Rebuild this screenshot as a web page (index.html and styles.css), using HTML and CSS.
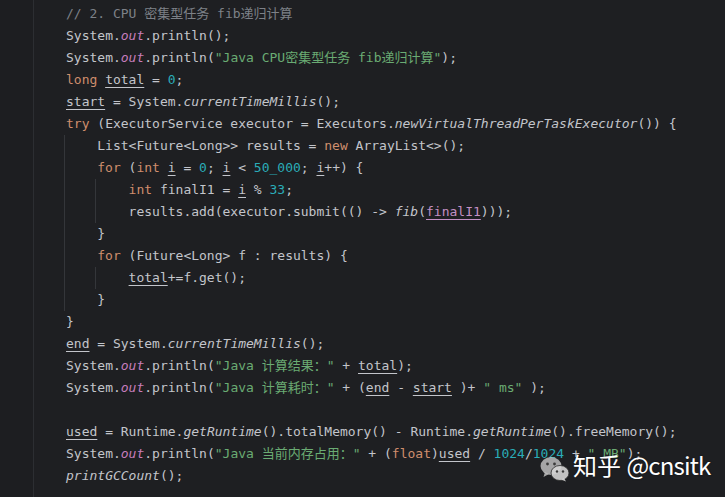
FILE: index.html
```html
<!DOCTYPE html>
<html>
<head>
<meta charset="utf-8">
<link rel="stylesheet" href="styles.css">
</head>
<body>
<div class="editor">
  <div class="gutter"></div>
  <div class="code">
    <div class="ln"><span class="c">// 2. CPU 密集型任务 fib递归计算</span></div>
    <div class="ln">System.<span class="f">out</span>.println();</div>
    <div class="ln">System.<span class="f">out</span>.println(<span class="s">"Java CPU密集型任务 fib递归计算"</span>);</div>
    <div class="ln"><span class="k">long</span> <span class="u">total</span> = <span class="n">0</span>;</div>
    <div class="ln"><span class="u">start</span> = System.<span class="i">currentTimeMillis</span>();</div>
    <div class="ln"><span class="k">try</span> (ExecutorService executor = Executors.<span class="i">newVirtualThreadPerTaskExecutor</span>()) {</div>
    <div class="block">
      <div class="ln">List&lt;Future&lt;Long&gt;&gt; results = <span class="k">new</span> ArrayList&lt;&gt;();</div>
      <div class="ln"><span class="k">for</span> (<span class="k">int</span> <span class="u">i</span> = <span class="n">0</span>; <span class="u">i</span> &lt; <span class="n">50_000</span>; <span class="u">i</span>++) {</div>
      <div class="block">
        <div class="ln"><span class="k">int</span> finalI1 = <span class="u">i</span> % <span class="n">33</span>;</div>
        <div class="ln">results.add(executor.submit(() -&gt; <span class="i">fib</span>(<span class="cap">finalI1</span>)));</div>
      </div>
      <div class="ln">}</div>
      <div class="ln"><span class="k">for</span> (Future&lt;Long&gt; f : results) {</div>
      <div class="block">
        <div class="ln"><span class="u">total</span>+=f.get();</div>
      </div>
      <div class="ln">}</div>
    </div>
    <div class="ln">}</div>
    <div class="ln"><span class="u">end</span> = System.<span class="i">currentTimeMillis</span>();</div>
    <div class="ln">System.<span class="f">out</span>.println(<span class="s">"Java 计算结果："</span> + <span class="u">total</span>);</div>
    <div class="ln">System.<span class="f">out</span>.println(<span class="s">"Java 计算耗时："</span> + (<span class="u">end</span> - <span class="u">start</span> )+ <span class="s">" ms"</span> );</div>
    <div class="ln"> </div>
    <div class="ln"><span class="u">used</span> = Runtime.<span class="i">getRuntime</span>().totalMemory() - Runtime.<span class="i">getRuntime</span>().freeMemory();</div>
    <div class="ln">System.<span class="f">out</span>.println(<span class="s">"Java 当前内存占用："</span> + (<span class="k">float</span>)<span class="u">used</span> / <span class="n">1024</span>/<span class="n">1024</span> + <span class="s">" MB"</span>);</div>
    <div class="ln"><span class="i">printGCCount</span>();</div>
  </div>
</div>
<div class="watermark">
  <svg class="wx" width="30" height="26" viewBox="0 0 30 26">
    <ellipse cx="11" cy="10" rx="10.5" ry="9" fill="#bdbdbd" fill-opacity="0.85"/>
    <path d="M5 16 L3.5 21 L9 18 Z" fill="#bdbdbd" fill-opacity="0.85"/>
    <circle cx="7.5" cy="8" r="1.4" fill="#3a3a3a"/>
    <circle cx="14.5" cy="8" r="1.4" fill="#3a3a3a"/>
    <ellipse cx="20" cy="17" rx="9" ry="7.5" fill="#d4d4d4" fill-opacity="0.9" stroke="#2a2a2a" stroke-width="0.8"/>
    <path d="M24 22 L26 25.5 L21 23.5 Z" fill="#d4d4d4" fill-opacity="0.9"/>
    <circle cx="17" cy="15.5" r="1.2" fill="#3a3a3a"/>
    <circle cx="23" cy="15.5" r="1.2" fill="#3a3a3a"/>
  </svg>
  <span class="wm-text">知乎 <span class="wm-latin">@cnsitk</span></span>
</div>
</body>
</html>
```

FILE: styles.css
```css
html, body {
  margin: 0;
  padding: 0;
  background: #1e1f22;
  width: 725px;
  height: 497px;
  overflow: hidden;
}

.editor {
  display: flex;
  height: 497px;
  position: relative;
}

.gutter {
  width: 33px;
  flex: none;
  background: #1d1e21;
  border-right: 1px solid #2c2e32;
}

.code {
  padding: 3px 0 0 32px;
  font-family: "DejaVu Sans Mono", "Noto Sans CJK SC", monospace;
  font-size: 13px;
  color: #c3c5cb;
}

.ln {
  height: 22px;
  line-height: 22px;
  white-space: pre;
}

.block {
  margin-left: -2px;
  border-left: 1px solid #34363a;
  padding-left: calc(4ch + 1px);
}

.c { color: #7d8188; }
.k { color: #cf8e6d; }
.s { color: #6aab73; }
.n { color: #2aacb8; }
.f { color: #c77dbb; font-style: italic; }
.i { font-style: italic; }
.u {
  text-decoration: underline;
  text-underline-offset: 3px;
  text-decoration-thickness: 1px;
}
.cap {
  color: #c38fc4;
  text-decoration: underline;
  text-underline-offset: 3px;
  text-decoration-thickness: 1px;
}

.watermark {
  position: absolute;
  left: 540px;
  top: 448px;
  display: flex;
  align-items: center;
  gap: 3px;
}

.wx {
  margin-top: 8px;
}

.wm-text {
  font-family: "Noto Sans CJK SC", "Noto Sans", sans-serif;
  font-size: 24px;
  color: #ffffff;
  line-height: 32px;
  text-shadow: 0 0 2px rgba(0,0,0,0.4);
}

.wm-latin {
  letter-spacing: -0.8px;
}
```
